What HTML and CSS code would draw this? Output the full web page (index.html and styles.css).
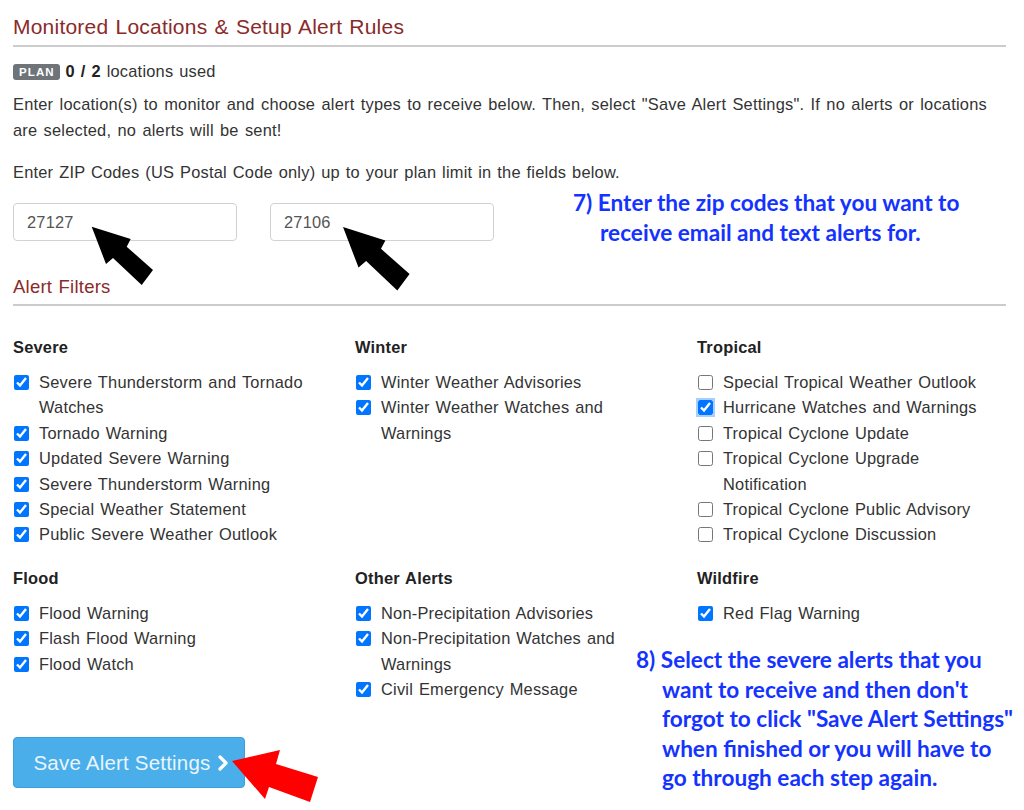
FILE: index.html
```html
<!DOCTYPE html>
<html>
<head>
<meta charset="utf-8">
<link rel="stylesheet" href="styles.css">
</head>
<body>
<div class="page">
  <h2 class="title">Monitored Locations &amp; Setup Alert Rules</h2>
  <div class="plan-row"><span class="badge">PLAN</span> <b>0 / 2</b> locations used</div>
  <p class="intro">Enter location(s) to monitor and choose alert types to receive below. Then, select "Save Alert Settings". If no alerts or locations are selected, no alerts will be sent!</p>
  <p class="zip-label">Enter ZIP Codes (US Postal Code only) up to your plan limit in the fields below.</p>
  <div class="zips">
    <input class="zip" type="text" value="27127">
    <input class="zip" type="text" value="27106">
  </div>
  <h3 class="subtitle">Alert Filters</h3>

  <div class="filters">
    <div class="group">
      <h4>Severe</h4>
      <label class="item"><input type="checkbox" checked><span>Severe Thunderstorm and Tornado Watches</span></label>
      <label class="item"><input type="checkbox" checked><span>Tornado Warning</span></label>
      <label class="item"><input type="checkbox" checked><span>Updated Severe Warning</span></label>
      <label class="item"><input type="checkbox" checked><span>Severe Thunderstorm Warning</span></label>
      <label class="item"><input type="checkbox" checked><span>Special Weather Statement</span></label>
      <label class="item"><input type="checkbox" checked><span>Public Severe Weather Outlook</span></label>
    </div>
    <div class="group">
      <h4>Winter</h4>
      <label class="item"><input type="checkbox" checked><span>Winter Weather Advisories</span></label>
      <label class="item"><input type="checkbox" checked><span>Winter Weather Watches and Warnings</span></label>
    </div>
    <div class="group">
      <h4>Tropical</h4>
      <label class="item"><input type="checkbox"><span>Special Tropical Weather Outlook</span></label>
      <label class="item"><input type="checkbox" checked class="focus"><span>Hurricane Watches and Warnings</span></label>
      <label class="item"><input type="checkbox"><span>Tropical Cyclone Update</span></label>
      <label class="item"><input type="checkbox"><span>Tropical Cyclone Upgrade Notification</span></label>
      <label class="item"><input type="checkbox"><span>Tropical Cyclone Public Advisory</span></label>
      <label class="item"><input type="checkbox"><span>Tropical Cyclone Discussion</span></label>
    </div>
    <div class="group">
      <h4>Flood</h4>
      <label class="item"><input type="checkbox" checked><span>Flood Warning</span></label>
      <label class="item"><input type="checkbox" checked><span>Flash Flood Warning</span></label>
      <label class="item"><input type="checkbox" checked><span>Flood Watch</span></label>
    </div>
    <div class="group">
      <h4>Other Alerts</h4>
      <label class="item"><input type="checkbox" checked><span>Non-Precipitation Advisories</span></label>
      <label class="item"><input type="checkbox" checked><span>Non-Precipitation Watches and Warnings</span></label>
      <label class="item"><input type="checkbox" checked><span>Civil Emergency Message</span></label>
    </div>
    <div class="group">
      <h4>Wildfire</h4>
      <label class="item"><input type="checkbox" checked><span>Red Flag Warning</span></label>
    </div>
  </div>

  <button class="save" type="button">Save Alert Settings <svg class="chev" width="12" height="16" viewBox="0 0 12 16"><polyline points="3,2 9,8 3,14" fill="none" stroke="#ffffff" stroke-width="3.2" stroke-linecap="round" stroke-linejoin="round"/></svg></button>
</div>

<div class="note note7">7) Enter the zip codes that you want to<br>receive email and text alerts for.</div>
<div class="note note8">8) Select the severe alerts that you<br>want to receive and then don't<br>forgot to click "Save Alert Settings"<br>when finished or you will have to<br>go through each step again.</div>

<svg class="arrow arrow1" width="70" height="70" viewBox="0 0 70 70"><polygon points="3.7,4.7 42.7,17 38.7,24.7 65,48 53.7,63 25,36 18,42" fill="#000"/></svg>
<svg class="arrow arrow2" width="76" height="76" viewBox="0 0 70 70"><polygon points="3.7,4.7 42.7,17 38.7,24.7 65,48 53.7,63 25,36 18,42" fill="#000"/></svg>
<svg class="arrow arrow3" width="95" height="65" viewBox="0 0 95 65"><polygon points="4,16 52,5 48,19 90,32 82,57 41,42 37,54" fill="#ff0000"/></svg>
</body>
</html>
```

FILE: styles.css
```css
* { box-sizing: border-box; }
html, body { margin: 0; padding: 0; background: #ffffff; }
body {
  font-family: "Liberation Sans", Arial, sans-serif;
  color: #333333;
  font-size: 16.4px;
  letter-spacing: 0.22px;
  word-spacing: 1.1px;
  position: relative;
  width: 1024px;
  height: 810px;
  overflow: hidden;
}
.page {
  padding: 12px 18px 0 13px;
}
.title {
  margin: 0;
  font-weight: normal;
  font-size: 21px;
  line-height: 30px;
  color: #8a2a2a;
  padding-bottom: 3px;
  border-bottom: 2px solid #cccccc;
}
.plan-row {
  margin-top: 12px;
  line-height: 24px;
  color: #333333;
}
.plan-row b { color: #222222; }
.badge {
  display: inline-block;
  background: #6f7479;
  color: #ffffff;
  font-size: 11.5px;
  font-weight: bold;
  letter-spacing: 1.1px;
  line-height: 16px;
  height: 16px;
  padding: 0 5px 0 6px;
  border-radius: 3px;
  vertical-align: 1px;
}
.intro {
  margin: 8px 0 0;
  line-height: 26px;
  word-spacing: 1.5px;
}
.zip-label {
  margin: 16px 0 0;
  line-height: 26px;
}
.zips {
  display: flex;
  gap: 33px;
  margin-top: 18px;
}
.zip {
  width: 224px;
  height: 38px;
  border: 1px solid #d2d2d2;
  border-radius: 4px;
  padding: 0 13px;
  font-family: "Liberation Sans", Arial, sans-serif;
  font-size: 16.4px;
  letter-spacing: 0.2px;
  color: #555555;
  outline: none;
}
.subtitle {
  margin: 33px 0 0;
  font-weight: normal;
  font-size: 18.5px;
  line-height: 26px;
  color: #8a2a2a;
  padding-bottom: 4px;
  border-bottom: 2px solid #cccccc;
}
.filters {
  display: grid;
  grid-template-columns: 342px 342px 1fr;
  row-gap: 18px;
  margin-top: 29px;
}
.group h4 {
  margin: 0 0 11px;
  font-size: 16.4px;
  line-height: 24px;
  font-weight: bold;
  color: #222222;
}
.item {
  display: flex;
  align-items: flex-start;
  line-height: 25.4px;
}
.item input {
  flex: none;
  width: 15px;
  height: 15px;
  margin: 5px 10px 0 1px;
  accent-color: #0075ff;
}
.item input.focus {
  box-shadow: 0 0 0 2px rgba(0, 117, 255, 0.35);
  border-radius: 3px;
}
.item span {
  max-width: 268px;
}
.save {
  margin-top: 35px;
  width: 232px;
  height: 51px;
  background: #4aaeea;
  border: 1px solid #3b9fdc;
  border-radius: 4px;
  color: #e9f5fd;
  font-family: "Liberation Sans", Arial, sans-serif;
  font-size: 20.5px;
  letter-spacing: 0.2px;
  padding: 0 0 0 4px;
  display: flex;
  align-items: center;
  justify-content: center;
  gap: 6px;
}
.chev { display: block; }
.note {
  position: absolute;
  font-family: Lato, "Open Sans", sans-serif;
  font-weight: bold;
  color: #1433ff;
  font-size: 22.6px;
  letter-spacing: 0;
  word-spacing: 0;
  white-space: nowrap;
}
.note7 {
  left: 573px;
  top: 188px;
  line-height: 30px;
  padding-left: 27px;
  text-indent: -27px;
}
.note8 {
  left: 636px;
  top: 645px;
  line-height: 29.5px;
  padding-left: 26px;
  text-indent: -26px;
}
.arrow { position: absolute; }
.arrow1 { left: 88px; top: 222px; }
.arrow2 { left: 339px; top: 222px; }
.arrow3 { left: 228px; top: 745px; }
```
